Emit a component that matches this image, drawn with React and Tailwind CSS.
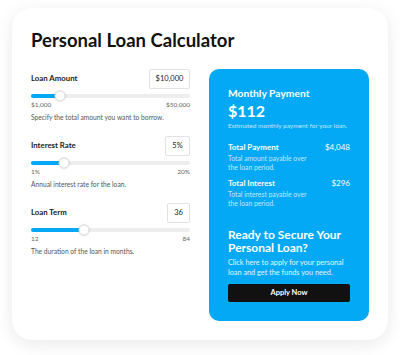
import React from "react";

const font = { fontFamily: 'Lato, "Noto Sans", sans-serif' };

function Slider({ frac }) {
  return (
    <div className="relative mt-[5px] h-[4px] w-full rounded-full bg-[#eeeeee]">
      <div className="h-full rounded-full bg-[#03a9f4]" style={{ width: `${frac * 100}%` }} />
      <div
        className="absolute top-1/2 h-[11px] w-[11px] -translate-x-1/2 -translate-y-1/2 rounded-full border border-[#dddddd] bg-white shadow-[0_0_2px_rgba(0,0,0,0.15)]"
        style={{ left: `${frac * 100}%` }}
      />
    </div>
  );
}

function Field({ label, value, boxW, min, max, frac, desc }) {
  return (
    <div className="flex flex-col">
      <div className="flex h-[20px] items-center justify-between">
        <span className="text-[7.8px] font-bold text-[#1a1a1a]">{label}</span>
        <div
          className={`flex h-[20px] items-center justify-center rounded-[2px] border border-[#e2e2e2] text-[7.5px] text-[#222] ${boxW}`}
        >
          {value}
        </div>
      </div>
      <Slider frac={frac} />
      <div className="mt-[3px] flex h-[8px] items-center justify-between text-[6.5px] leading-[8px] text-[#666]">
        <span>{min}</span>
        <span>{max}</span>
      </div>
      <div className="mt-[3.5px] h-[9px] text-[6.7px] leading-[9px] text-[#555]">{desc}</div>
    </div>
  );
}

export default function App() {
  return (
    <div className="h-[355px] w-[400px] bg-white pl-[12px] pt-[8px]" style={font}>
      <div className="flex h-[332px] w-[376px] flex-col rounded-[20px] bg-white px-[19px] shadow-[0_4px_18px_rgba(0,0,0,0.09)]">
        <h1 className="mt-[20px] h-[24px] text-[18.5px] font-bold leading-[24px] text-[#111]">
          Personal Loan Calculator
        </h1>
        <div className="mt-[17px] flex gap-[19px]">
          <div className="flex w-[159px] flex-col gap-[14.5px]">
            <Field
              label="Loan Amount"
              value="$10,000"
              boxW="w-[41px]"
              min="$1,000"
              max="$50,000"
              frac={9000 / 49000}
              desc="Specify the total amount you want to borrow."
            />
            <Field
              label="Interest Rate"
              value="5%"
              boxW="w-[25px]"
              min="1%"
              max="20%"
              frac={4 / 19}
              desc="Annual interest rate for the loan."
            />
            <Field
              label="Loan Term"
              value="36"
              boxW="w-[23px]"
              min="12"
              max="84"
              frac={24 / 72}
              desc="The duration of the loan in months."
            />
          </div>
          <div className="flex h-[252px] w-[160px] flex-col rounded-[10px] bg-[#03a9f4] px-[19px] pt-[17px] text-white">
            <div className="text-[10.3px] font-bold leading-[15px]">Monthly Payment</div>
            <div className="text-[16px] font-bold leading-[20px]">$112</div>
            <div className="mt-0 text-[6.5px] leading-[9px] text-white/75">
              Estimated monthly payment for your loan.
            </div>
            <div className="mt-[12px] flex justify-between">
              <div className="flex flex-col">
                <span className="text-[8px] font-bold leading-[10px]">Total Payment</span>
                <span className="mt-[2px] w-[82px] text-[6.8px] leading-[9px] text-white/75">
                  Total amount payable over the loan period.
                </span>
              </div>
              <span className="text-[8px] leading-[10px]">$4,048</span>
            </div>
            <div className="mt-[6px] flex justify-between">
              <div className="flex flex-col">
                <span className="text-[8px] font-bold leading-[10px]">Total Interest</span>
                <span className="mt-[2px] w-[82px] text-[6.8px] leading-[9px] text-white/75">
                  Total interest payable over the loan period.
                </span>
              </div>
              <span className="text-[8px] leading-[10px]">$296</span>
            </div>
            <div className="mt-[20px] text-[12px] font-bold leading-[13px]">
              Ready to Secure Your Personal Loan?
            </div>
            <div className="mt-[4px] text-[7.3px] leading-[10px] text-white/90">
              Click here to apply for your personal loan and get the funds you need.
            </div>
            <button className="mt-[6px] flex h-[18px] w-full items-center justify-center rounded-[2px] bg-[#111] text-[7.5px] font-bold text-white">
              Apply Now
            </button>
          </div>
        </div>
      </div>
    </div>
  );
}
